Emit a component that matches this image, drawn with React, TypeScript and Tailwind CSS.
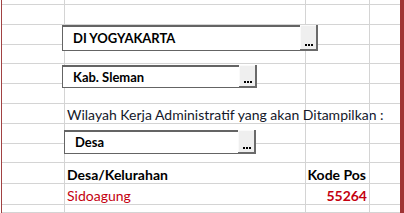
import type { ReactNode } from 'react'

const FONT = "font-['Lato','Liberation_Sans',sans-serif]"

// row heights include the 1px grid line at the bottom
const ROWS = ['h-[5px]', 'h-[20px]', 'h-[20px]', 'h-[20px]', 'h-[20px]', 'h-[20px]', 'h-[20px]', 'h-[20px]', 'h-[20px]', 'h-[21px]', 'h-[21px]', 'h-[8px]']

interface CellRowProps {
  readonly height: string
  readonly b?: ReactNode
  readonly c?: ReactNode
}

function CellRow({ height, b, c }: CellRowProps) {
  return (
    <div className={`flex ${height} border-b border-[#d4d4d4]`}>
      <div className="w-[63px] shrink-0 border-r border-[#d4d4d4]" />
      <div className="w-[241px] shrink-0 border-r border-[#d4d4d4] relative">
        {b}
      </div>
      <div className="w-[64px] shrink-0 border-r border-[#d4d4d4] relative">{c}</div>
      <div className="w-[30px] shrink-0" />
    </div>
  )
}

interface ComboProps {
  readonly label: string
  readonly className: string
}

function Combo({ label, className }: ComboProps) {
  return (
    <div className={`absolute flex bg-white ${className}`}>
      <div className="flex-1 flex items-center pl-[10px] border-l border-t-2 border-b border-[#646464]">
        <span className="text-[13px] font-bold text-black leading-none">{label}</span>
      </div>
      <div className="relative w-[18px] h-full bg-[#6a6a6a]">
        <div className="absolute left-0 top-0 right-[2px] bottom-[2px] bg-[#efefef] border-l border-t border-[#fafafa] flex items-end justify-center pb-[3px] gap-px">
          <span className="w-[2px] h-[2px] bg-black" />
          <span className="w-[2px] h-[2px] bg-black" />
          <span className="w-[2px] h-[2px] bg-black" />
        </div>
      </div>
    </div>
  )
}

const TEXT = 'absolute bottom-0 whitespace-nowrap text-[14px] leading-[16px]'

export default function App() {
  const content: Record<number, { b?: ReactNode; c?: ReactNode }> = {
    6: {
      b: (
        <span className={`${TEXT} left-[2px] text-[#14182a]`}>
          Wilayah Kerja Administratif yang akan Ditampilkan :
        </span>
      ),
    },
    9: {
      b: <span className={`${TEXT} left-[2px] font-bold text-black`}>Desa/Kelurahan</span>,
      c: <span className={`${TEXT} right-[3px] font-bold text-black`}>Kode Pos</span>,
    },
    10: {
      b: <span className={`${TEXT} left-[2px] text-[#c40010]`}>Sidoagung</span>,
      c: <span className={`${TEXT} right-[2px] font-bold text-[#c40010]`}>55264</span>,
    },
  }

  return (
    <div className={`w-[404px] h-[213px] bg-white overflow-hidden ${FONT}`}>
      <div className="relative flex h-full">
        <div className="w-px shrink-0 bg-white" />
        <div className="w-px shrink-0 bg-[#a14242]" />
        <div className="flex flex-col">
          {ROWS.map((h, i) => (
            <CellRow key={i} height={h} b={content[i]?.b} c={content[i]?.c} />
          ))}
        </div>
        <div className="w-[4px] shrink-0 bg-[#a03434]" />

        <Combo label="DI YOGYAKARTA" className="left-[62px] top-[25px] w-[256px] h-[26px]" />
        <Combo label="Kab. Sleman" className="left-[62px] top-[65px] w-[195px] h-[23px]" />
        <Combo label="Desa" className="left-[64px] top-[130px] w-[192px] h-[24px]" />
      </div>
    </div>
  )
}
